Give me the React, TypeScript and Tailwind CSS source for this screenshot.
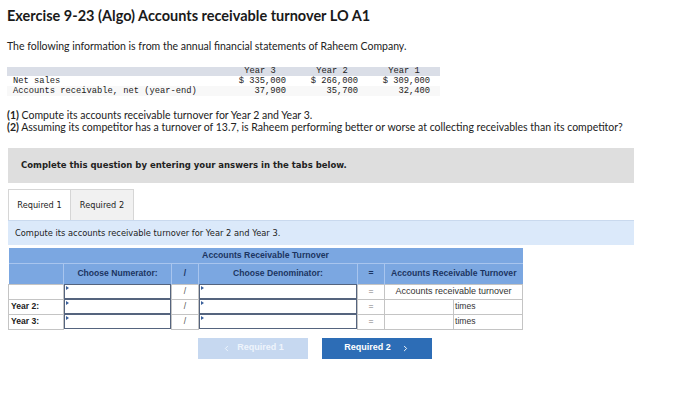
import { ChevronLeft, ChevronRight } from 'lucide-react';

const proxima = { fontFamily: 'Lato, "Open Sans", sans-serif' };

function DataTable() {
  const rows = [
    { label: 'Net sales', v: ['$ 335,000', '$ 266,000', '$ 309,000'] },
    { label: 'Accounts receivable, net (year-end)', v: ['37,900', '35,700', '32,400'] },
  ];
  return (
    <div className="mt-[15px] w-[433px] text-[8.75px] leading-[10px] text-[#222]" style={{ fontFamily: '"Liberation Mono", monospace' }}>
      <div className="flex h-[9px] items-center bg-[#dadee7] leading-[9px]">
        <div className="w-[217px]" />
        <div className="w-[72px] text-center">Year 3</div>
        <div className="w-[72px] text-center">Year 2</div>
        <div className="w-[72px] text-center">Year 1</div>
      </div>
      {rows.map((r, i) => (
        <div key={r.label} className={`flex h-[10px] items-center ${i === 1 ? 'bg-[#f8f8f8]' : ''}`}>
          <div className="w-[217px] pl-[6px]">{r.label}</div>
          {r.v.map((x) => (
            <div key={x} className="w-[72px] pr-[10px] text-right">{x}</div>
          ))}
        </div>
      ))}
    </div>
  );
}

function InputCell() {
  return (
    <td className="p-0">
      <div className="relative h-[15px] border border-[#55647e] bg-white">
        <span className="absolute left-[1px] top-[1px] h-0 w-0 border-y-[2px] border-l-[3px] border-y-transparent border-l-[#3a5f9a]" />
      </div>
    </td>
  );
}

function TurnoverTable() {
  const head = 'bg-[#7ba7e1] text-[#1b3561] font-bold';
  const body = [
    { label: '', result: 'Accounts receivable turnover' },
    { label: 'Year 2:', result: 'times' },
    { label: 'Year 3:', result: 'times' },
  ];
  return (
    <table
      className="mt-[3px] ml-[1px] w-[514px] table-fixed border-collapse text-[8.6px]"
      style={{ fontFamily: '"Liberation Sans", Arial, sans-serif' }}
    >
      <colgroup>
        <col className="w-[55px]" />
        <col className="w-[108px]" />
        <col className="w-[27px]" />
        <col className="w-[159px]" />
        <col className="w-[27px]" />
        <col className="w-[69px]" />
        <col className="w-[69px]" />
      </colgroup>
      <tbody>
        <tr className="h-[15px]">
          <td colSpan={7} className={`${head} text-center text-[8.7px]`}>Accounts Receivable Turnover</td>
        </tr>
        <tr className="h-[21px]">
          <td className={`${head} border-t border-r border-[#a8c5ee]`} />
          <td className={`${head} border-t border-r border-[#a8c5ee] text-center`}>Choose Numerator:</td>
          <td className={`${head} border-t border-r border-[#a8c5ee] text-center`}>/</td>
          <td className={`${head} border-t border-r border-[#a8c5ee] text-center`}>Choose Denominator:</td>
          <td className={`${head} border-t border-r border-[#a8c5ee] text-center`}>=</td>
          <td colSpan={2} className={`${head} border-t border-[#a8c5ee] text-center`}>Accounts Receivable Turnover</td>
        </tr>
        {body.map((r, i) => (
          <tr key={i} className="h-[15px]">
            <td className="border border-[#c4c4c4] pl-[2px] font-bold text-[#222]">{r.label}</td>
            <InputCell />
            <td className="border border-[#c4c4c4] text-center text-[#555]">/</td>
            <InputCell />
            <td className="border border-[#c4c4c4] text-center text-[#777]">=</td>
            {i === 0 ? (
              <td colSpan={2} className="border border-[#c4c4c4] text-center text-[9px] text-[#333]">{r.result}</td>
            ) : (
              <>
                <td className="border border-[#c4c4c4]" />
                <td className="border border-[#c4c4c4] pl-[1px] text-[#333]">{r.result}</td>
              </>
            )}
          </tr>
        ))}
      </tbody>
    </table>
  );
}

export default function App() {
  const verdana = { fontFamily: '"DejaVu Sans", Verdana, sans-serif' };
  return (
    <div className="h-[399px] w-[700px] bg-white px-[7px] pt-[6px] text-[#222]">
      <h1 className="text-[14.5px] font-bold leading-[20px] text-[#1a1a1a]" style={proxima}>
        Exercise 9-23 (Algo) Accounts receivable turnover LO A1
      </h1>
      <p className="mt-[14px] text-[10.5px] leading-[12px]" style={proxima}>
        The following information is from the annual financial statements of Raheem Company.
      </p>
      <DataTable />
      <div className="mt-[13px] text-[10.5px] leading-[12px]" style={proxima}>
        <p><b>(1)</b> Compute its accounts receivable turnover for Year 2 and Year 3.</p>
        <p><b>(2)</b> Assuming its competitor has a turnover of 13.7, is Raheem performing better or worse at collecting receivables than its competitor?</p>
      </div>
      <div className="mt-[15px] ml-[1px] flex h-[35px] w-[626px] items-center bg-[#dedede] pl-[13px] text-[8.5px] font-bold" style={verdana}>
        Complete this question by entering your answers in the tabs below.
      </div>
      <div className="mt-[6px] ml-[1px] flex h-[31px] text-[8.2px] text-[#222]" style={verdana}>
        <div className="flex w-[63px] items-center justify-center border-x border-t border-[#d6d6d6] bg-white">Required 1</div>
        <div className="flex w-[63px] items-center justify-center border-t border-r border-[#d6d6d6] bg-[#f1f1f1]">Required 2</div>
      </div>
      <div className="ml-[1px] flex h-[25px] w-[626px] items-center border-t border-[#c9d9ee] bg-[#dbe9fa] pl-[7px] text-[8.3px]" style={verdana}>
        Compute its accounts receivable turnover for Year 2 and Year 3.
      </div>
      <TurnoverTable />
      <div className="mt-[8px] flex gap-[14px] pl-[191px] text-[9px] font-bold text-white" style={{ fontFamily: '"Liberation Sans", Arial, sans-serif' }}>
        <button className="flex h-[21px] w-[110px] items-center justify-center gap-[6px] bg-[#c6d8f0] text-[#eef4fc]">
          <ChevronLeft className="h-[9px] w-[9px]" strokeWidth={2.5} />
          Required 1
        </button>
        <button className="flex h-[21px] w-[110px] items-center justify-center gap-[10px] bg-[#2d6db6]">
          Required 2
          <ChevronRight className="h-[9px] w-[9px]" strokeWidth={2.5} />
        </button>
      </div>
    </div>
  );
}
